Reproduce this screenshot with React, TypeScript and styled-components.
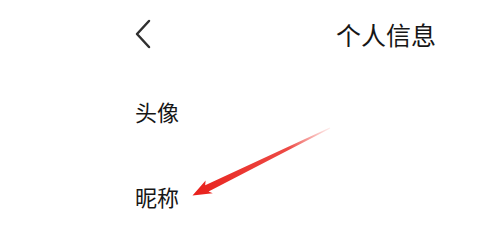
import React from "react";
import styled, { createGlobalStyle } from "styled-components";

const GlobalStyle = createGlobalStyle`
  html, body {
    margin: 0;
    padding: 0;
    background: #ffffff;
  }
  body {
    font-family: "Noto Sans CJK SC", "Noto Sans", sans-serif;
    color: #1b1b1b;
  }
`;

const Page = styled.div`
  position: relative;
  width: 479px;
  height: 243px;
  overflow: hidden;
  background: #ffffff;
`;

const Content = styled.div`
  display: flex;
  flex-direction: column;
  padding: 0 43px 0 134px;
`;

const Header = styled.div`
  display: flex;
  align-items: center;
  justify-content: space-between;
  height: 68px;
`;

const BackButton = styled.button`
  display: flex;
  align-items: center;
  padding: 0;
  border: none;
  background: none;
  cursor: pointer;
`;

const Title = styled.h1`
  margin: 0;
  font-size: 25px;
  font-weight: 400;
  line-height: 1;
  color: #161616;
`;

const Row = styled.div`
  display: flex;
  align-items: center;
  height: 85px;
  padding-left: 1px;
`;

const Label = styled.span`
  font-size: 22px;
  line-height: 1;
  color: #161616;
`;

const Annotation = styled.svg`
  position: absolute;
  top: 0;
  left: 0;
  pointer-events: none;
`;

const ArrowMark = () => (
  <Annotation width="479" height="243" viewBox="0 0 479 243">
    <defs>
      <linearGradient id="fade" x1="330" y1="128" x2="193" y2="195" gradientUnits="userSpaceOnUse">
        <stop offset="0" stopColor="#f04a44" stopOpacity="0.1" />
        <stop offset="0.3" stopColor="#ea2b25" stopOpacity="0.85" />
        <stop offset="1" stopColor="#e8201b" />
      </linearGradient>
    </defs>
    <polygon
      fill="url(#fade)"
      points="329.8,127.6 205.2,185.2 205.6,180.4 192.5,195.5 212.8,193.2 208.6,191.6 330.2,128.4"
    />
  </Annotation>
);

export default function App() {
  return (
    <>
      <GlobalStyle />
      <Page>
        <Content>
          <Header>
            <BackButton aria-label="back">
              <svg width="18" height="30" viewBox="0 0 18 30">
                <polyline
                  points="15,2 3,15 15,28"
                  fill="none"
                  stroke="#303030"
                  strokeWidth="2.5"
                  strokeLinecap="round"
                  strokeLinejoin="round"
                />
              </svg>
            </BackButton>
            <Title>个人信息</Title>
          </Header>
          <Row>
            <Label>头像</Label>
          </Row>
          <Row>
            <Label>昵称</Label>
          </Row>
        </Content>
        <ArrowMark />
      </Page>
    </>
  );
}
